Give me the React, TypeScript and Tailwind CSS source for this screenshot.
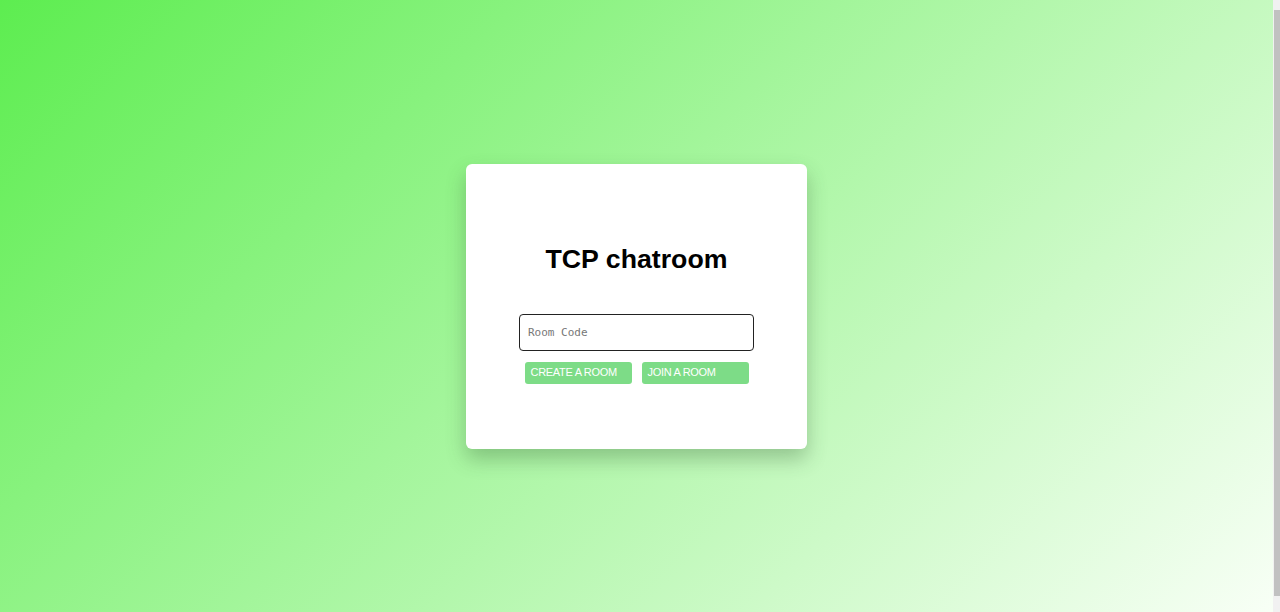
export default function App() {
  return (
    <div className="flex h-[612px] w-full overflow-hidden">
      {/* Page */}
      <main className="flex flex-1 items-center justify-center bg-[linear-gradient(135deg,#5ded50_0%,#f8fff6_100%)]">
        <div className="flex h-[285px] w-[341px] flex-col items-center rounded-[6px] bg-white pt-[79px] shadow-[0_10px_20px_rgba(40,80,40,0.3)]">
          <h1 className="text-[26.7px] font-bold leading-[32px] text-black [font-family:'Liberation_Sans',Arial,sans-serif]">
            TCP chatroom
          </h1>
          <input
            type="text"
            placeholder="Room Code"
            className="mt-[39px] h-[37px] w-[235px] rounded-[4px] border border-[#222] bg-white px-[8px] text-[11px] text-black outline-none placeholder:text-[#777] [font-family:'DejaVu_Sans_Mono',monospace]"
          />
          <div className="mt-[11px] flex gap-[10px]">
            <button className="h-[22px] w-[107px] rounded-[3px] bg-[#7ddc87] pl-[6px] text-left text-[11px] tracking-[-0.3px] text-white [font-family:'Liberation_Sans',Arial,sans-serif]">
              CREATE A ROOM
            </button>
            <button className="h-[22px] w-[107px] rounded-[3px] bg-[#7ddc87] pl-[6px] text-left text-[11px] tracking-[-0.3px] text-white [font-family:'Liberation_Sans',Arial,sans-serif]">
              JOIN A ROOM
            </button>
          </div>
        </div>
      </main>

      {/* Scrollbar strip */}
      <div className="flex w-[7px] flex-col bg-[#f1f1f1] pb-[16px] pl-[1px] pt-[10px]">
        <div className="flex-1 bg-[#c1c1c1]" />
      </div>
    </div>
  );
}
